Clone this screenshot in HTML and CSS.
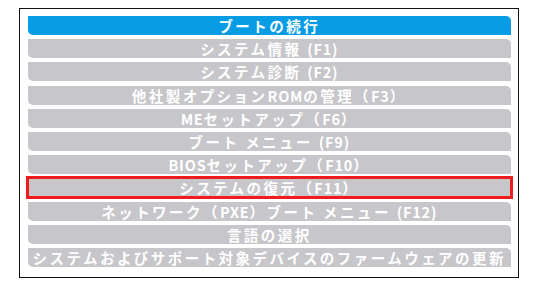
FILE: index.html
```html
<!DOCTYPE html>
<html lang="ja">
<head>
<meta charset="utf-8">
<link rel="stylesheet" href="styles.css">
</head>
<body>
<div class="frame">
  <div class="row active">ブートの続行</div>
  <div class="row">システム情報 <span class="key">(F1)</span></div>
  <div class="row">システム診断 <span class="key">(F2)</span></div>
  <div class="row">他社製オプション<span class="key">ROM</span>の管理（<span class="key">F3</span>）</div>
  <div class="row"><span class="key">ME</span>セットアップ（<span class="key">F6</span>）</div>
  <div class="row">ブート メニュー <span class="key">(F9)</span></div>
  <div class="row"><span class="key">BIOS</span>セットアップ（<span class="key">F10</span>）</div>
  <div class="row marked">システムの復元（<span class="key">F11</span>）</div>
  <div class="row">ネットワーク（<span class="key">PXE</span>）ブート メニュー <span class="key">(F12)</span></div>
  <div class="row">言語の選択</div>
  <div class="row">システムおよびサポート対象デバイスのファームウェアの更新</div>
</div>
</body>
</html>
```
FILE: styles.css
```css
html, body {
  margin: 0;
  padding: 0;
  background: #ffffff;
}
body {
  padding: 8px 0 0 19px;
}
.frame {
  box-sizing: border-box;
  width: 500px;
  height: 270px;
  border: 1.5px solid #111;
  padding: 7px 7px 0 7.5px;
  display: flex;
  flex-direction: column;
  gap: 4.2px;
}
.row {
  height: 19px;
  background: #c7c6ca;
  color: #ffffff;
  border-radius: 0 5px 0 5px;
  font-family: "Noto Sans CJK JP", "Noto Sans", sans-serif;
  font-weight: 700;
  font-size: 14.5px;
  line-height: 19px;
  letter-spacing: 2.45px;
  text-align: center;
  white-space: nowrap;
  overflow: visible;
}
.key {
  letter-spacing: 0.8px;
}
.row.active {
  background: #079ce3;
}
.row.marked {
  border-radius: 0;
  outline: 3px solid #ee1c1c;
  outline-offset: -1px;
}
```
